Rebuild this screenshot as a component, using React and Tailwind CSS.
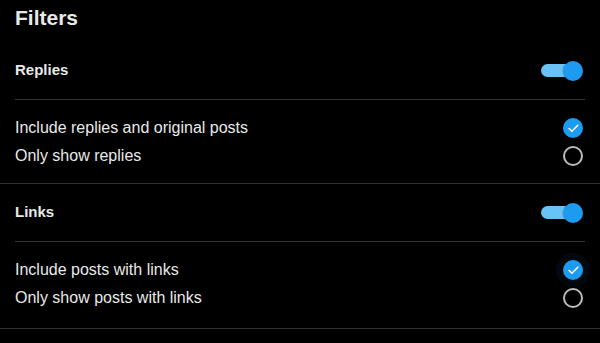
import { Check } from 'lucide-react'

const sections = [
  {
    title: 'Replies',
    options: [
      { label: 'Include replies and original posts', checked: true },
      { label: 'Only show replies', checked: false },
    ],
  },
  {
    title: 'Links',
    options: [
      { label: 'Include posts with links', checked: true, hover: true },
      { label: 'Only show posts with links', checked: false },
    ],
  },
]

function Toggle() {
  return (
    <div className="relative w-[42px] h-5 flex items-center">
      <div className="w-[38px] h-[13px] rounded-full bg-[#6ac3f6]" />
      <div className="absolute right-0 top-0 w-5 h-5 rounded-full bg-[#1d9bf0] shadow-[0_0_2px_rgba(0,0,0,0.4)]" />
    </div>
  )
}

function Radio({ checked, hover }) {
  return (
    <div className="relative w-5 h-5 flex items-center justify-center">
      {hover && <div className="absolute -inset-[7px] rounded-full bg-[#1d9bf0]/[0.06]" />}
      {checked ? (
        <div className="relative w-5 h-5 rounded-full bg-[#1d9bf0] flex items-center justify-center">
          <Check size={13} strokeWidth={3} className="text-white" />
        </div>
      ) : (
        <div className="w-5 h-5 rounded-full border-2 border-[#b9bcbe]" />
      )}
    </div>
  )
}

export default function App() {
  return (
    <div className="w-[600px] h-[343px] bg-black text-[#e7e9ea] overflow-hidden font-['Liberation_Sans',Arial,sans-serif]">
      <div className="h-[42px] px-[15px] text-[21px] font-bold leading-[36px]">Filters</div>
      {sections.map((section, index) => (
        <section key={section.title} className={index > 0 ? 'border-t border-[#2f3336]' : ''}>
          <div className="mx-[15px] h-[58px] flex items-center justify-between border-b border-[#2f3336] pr-[2px]">
            <span className="text-[15px] font-bold">{section.title}</span>
            <Toggle />
          </div>
          <div className={index > 0 ? 'pt-[14px] pb-[16px]' : 'pt-[14px] pb-[13px]'}>
            {section.options.map(option => (
              <div key={option.label} className="h-7 px-[15px] flex items-center justify-between pr-[17px]">
                <span className="text-[16px]">{option.label}</span>
                <Radio checked={option.checked} hover={option.hover} />
              </div>
            ))}
          </div>
        </section>
      ))}
      <div className="border-t border-[#2f3336]" />
    </div>
  )
}
